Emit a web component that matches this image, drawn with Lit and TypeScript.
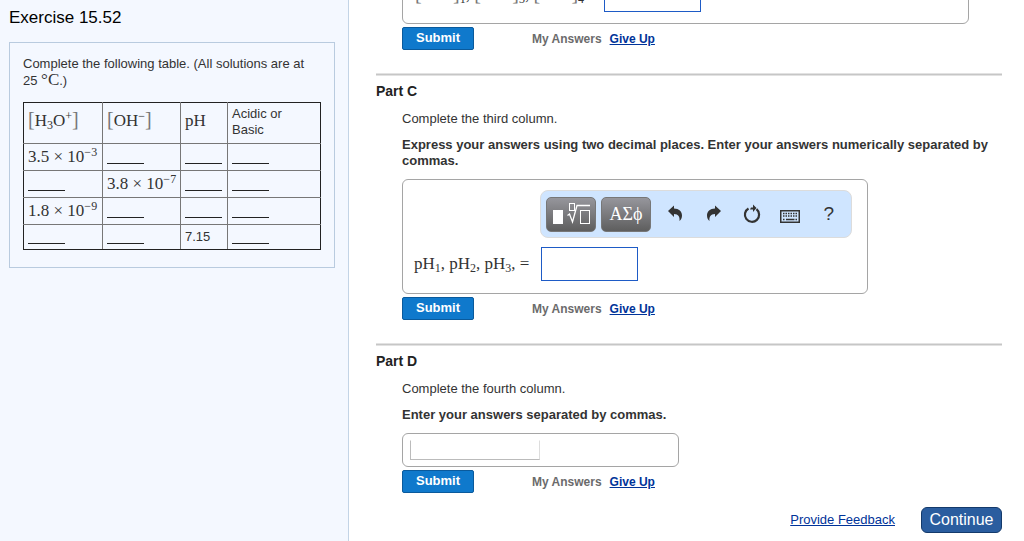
import { LitElement, html, css } from "lit";
import { customElement } from "lit/decorators.js";

const power = (base: string, exp: string) => html`<span class="math">${base} × 10<sup>−${exp}</sup></span>`;
const blank = html`<span class="blank"></span>`;
const hydroxide = html`<span class="bracket">[</span>OH<sup>−</sup><span class="bracket">]</span>`;

@customElement("submit-row")
class SubmitRow extends LitElement {
  static styles = css`
    :host { display: flex; align-items: center; padding-top: 3px; }
    .submit {
      box-sizing: border-box; width: 72px; height: 23px; margin: 0; padding: 0 0 1px;
      border: 1px solid #0a5a9c; border-radius: 2px; background: #0f79cc; color: #fff;
      font: bold 13px/18px "Liberation Sans", Arial, sans-serif;
    }
    .mine { margin-left: 58px; color: #6b6b6b; font: bold 12px/16px "Liberation Sans", Arial, sans-serif; }
    .give { margin-left: 8px; color: #003399; font: bold 12px/16px "Liberation Sans", Arial, sans-serif; }
  `;
  render() {
    return html`<button class="submit" type="button">Submit</button>
      <span class="mine">My Answers</span>
      <a class="give" href="#">Give Up</a>`;
  }
}

@customElement("math-toolbar")
class MathToolbar extends LitElement {
  static styles = css`
    :host {
      box-sizing: border-box; display: flex; align-items: center; width: 312px; height: 48px; padding: 0 3px 0 5px;
      border: 1px solid #dcdcdc; border-radius: 8px; background: #cfe5ff;
    }
    button { margin: 0; padding: 0; border: 0; background: none; color: #333; display: grid; place-items: center; }
    .key {
      box-sizing: border-box; width: 50px; height: 35px; margin-right: 5px; border: 1px solid #777; border-radius: 5px;
      background: linear-gradient(#96969c, #5e5e5e); color: #fff; font: 18px/20px "Liberation Serif", serif;
    }
    .tool { flex: 1; height: 35px; font: 19px/20px "Liberation Sans", Arial, sans-serif; }
    svg { display: block; }
  `;
  render() {
    return html`
      <button class="key" type="button" aria-label="Templates">
        <svg width="40" height="26" viewBox="0 0 40 26" fill="none" stroke="#fff">
          <rect x="2" y="9" width="10" height="14" fill="#fff" stroke="none" />
          <rect x="18.5" y="2.500" width="5" height="7" />
          <path d="M16.500 14.500l2-1.500 3 8L26 4.500h13" stroke-width="1.300" />
          <rect x="29.5" y="9.500" width="9" height="13" />
        </svg>
      </button>
      <button class="key" type="button" aria-label="Symbols">ΑΣϕ</button>
      <button class="tool" type="button" aria-label="Undo">
        <svg width="16" height="18" viewBox="0 0 16 18" fill="#333"><path d="M1 6 7 .5V3.500c5 0 8 3 8 7 0 2.300-1 4.300-2.500 5.500C13 12 11.500 9 7 9v3z" /></svg>
      </button>
      <button class="tool" type="button" aria-label="Redo">
        <svg width="16" height="18" viewBox="0 0 16 18" fill="#333"><path d="M15 6 9 .5V3.500c-5 0-8 3-8 7 0 2.300 1 4.300 2.500 5.500C3 12 4.500 9 9 9v3z" /></svg>
      </button>
      <button class="tool" type="button" aria-label="Reset">
        <svg width="18" height="20" viewBox="0 0 18 20"><path d="M5.500 4.500A7.100 7.100 0 1 0 13.500 5.200" fill="none" stroke="#333" stroke-width="2.200" /><path d="M8 3.600H10V.500L13.500 4 10 8V5.600H7z" fill="#333" /></svg>
      </button>
      <button class="tool" type="button" aria-label="Keyboard">
        <svg width="20" height="17" viewBox="0 -4 20 17"><rect x=".75" y=".75" width="18.500" height="11.500" fill="none" stroke="#333" stroke-width="1.500" />
          <path d="M3 3.500h14M3 6h14" stroke="#333" stroke-width="1.500" stroke-dasharray="1.500 1" /><path d="M3 9.500h1.500M6 9.500h8.500M15.500 9.500H17" stroke="#333" stroke-width="1.500" /></svg>
      </button>
      <button class="tool" type="button" aria-label="Help">?</button>`;
  }
}

@customElement("app-root")
class AppRoot extends LitElement {
  static styles = css`
    :host {
      display: grid; grid-template-columns: 349px 1fr; height: 100vh; overflow: hidden; background: #fff; color: #333;
      font: 13px/16px "Liberation Sans", Arial, sans-serif;
    }
    .left { box-sizing: border-box; padding: 8px 13px 0 9px; border-right: 1px solid #c3d4e6; background: #f4f8ff; }
    h1 { margin: 0 0 14px; color: #000; font-size: 17px; line-height: 20px; font-weight: normal; }
    .problem { padding: 13px 13px 17px; border: 1px solid #b9cbdf; }
    .problem p { margin: 0 0 13px; }
    .math { font: 17px/16px "Liberation Serif", serif; white-space: nowrap; }
    .math sup, .math sub { font-size: 12px; line-height: 0; }
    .math sub { vertical-align: -3px; }
    .math sup { vertical-align: 6px; }
    .bracket { font-size: 20px; line-height: 0; color: #777; }
    table { box-sizing: border-box; width: 298px; border-collapse: collapse; table-layout: fixed; border: 1px solid #222; }
    th, td { box-sizing: border-box; height: 27px; padding: 0 4px; border: 1px solid #777; text-align: left; font-weight: normal; }
    th { height: 41px; padding-bottom: 3px; }
    tr:first-child > * { border-top-color: #222; }
    tr:last-child > * { height: 25px; border-bottom-color: #222; }
    tr > :first-child { border-left-color: #222; }
    tr > :last-child { border-right-color: #222; }
    .blank { display: block; width: 37px; height: 12px; border-bottom: 1px solid #222; }
    .right { padding: 0 22px 0 27px; }
    .body { padding-left: 26px; }
    section { margin-top: 23px; }
    section::before { content: ""; display: block; height: 3px; background: linear-gradient(#e2e2e2 1px, #c6c6c6 1px 2px, #e2e2e2 2px); }
    h2 { margin: 0; padding: 6px 0 11px; font-size: 14px; line-height: 18px; color: #222; }
    .body p { margin: 0 0 10px; }
    .body p.how { font-weight: bold; }
    .box { box-sizing: border-box; border: 1px solid #a5a5a5; border-radius: 6px; }
    .b { width: 567px; height: 84px; margin-top: -60px; padding: 38px 12px 11px; display: flex; align-items: flex-end; }
    .b label { flex: 0 0 189px; padding-bottom: 9px; }
    .c { width: 466px; height: 115px; padding: 10px 15px 12px 11px; display: flex; flex-direction: column; justify-content: space-between; }
    .c math-toolbar { align-self: flex-end; }
    .line { display: flex; align-items: center; }
    .line label { flex: 0 0 127px; }
    .d { width: 277px; height: 34px; padding: 6px 7px; display: flex; }
    .field { box-sizing: border-box; width: 97px; height: 34px; border: 1px solid #1e5bc6; background: #fff; }
    .plain { box-sizing: border-box; width: 130px; height: 20px; border: 1px solid #bbb; border-top-color: #fff; border-right-color: #ddd; }
    .end { display: flex; justify-content: flex-end; align-items: center; gap: 26px; margin-top: 14px; }
    .end a { color: #003399; }
    .continue {
      box-sizing: border-box; width: 81px; height: 26px; padding: 0; border: 1px solid #143a6b; border-radius: 6px;
      background: #2a5d9f; color: #fff; font: 16px/20px "Liberation Sans", Arial, sans-serif;
    }
  `;
  render() {
    return html`
      <aside class="left">
        <h1>Exercise 15.52</h1>
        <div class="problem">
          <p>Complete the following table. (All solutions are at 25 <span class="math">°C</span>.)</p>
          <table>
            <colgroup><col width="79" /><col width="78" /><col width="47" /><col /></colgroup>
            <tbody>
              <tr>
                <th><span class="math"><span class="bracket">[</span>H<sub>3</sub>O<sup>+</sup><span class="bracket">]</span></span></th>
                <th><span class="math">${hydroxide}</span></th>
                <th><span class="math">pH</span></th>
                <th>Acidic or<br />Basic</th>
              </tr>
              <tr><td>${power("3.5", "3")}</td><td>${blank}</td><td>${blank}</td><td>${blank}</td></tr>
              <tr><td>${blank}</td><td>${power("3.8", "7")}</td><td>${blank}</td><td>${blank}</td></tr>
              <tr><td>${power("1.8", "9")}</td><td>${blank}</td><td>${blank}</td><td>${blank}</td></tr>
              <tr><td>${blank}</td><td>${blank}</td><td>7.15</td><td>${blank}</td></tr>
            </tbody>
          </table>
        </div>
      </aside>
      <main class="right">
        <div class="body">
          <div class="box b">
            <label for="b" class="math">${hydroxide}<sub>1</sub>, ${hydroxide}<sub>3</sub>, ${hydroxide}<sub>4</sub> =</label>
            <input id="b" class="field" />
          </div>
          <submit-row></submit-row>
        </div>
        <section>
          <h2>Part C</h2>
          <div class="body">
            <p>Complete the third column.</p>
            <p class="how">Express your answers using two decimal places. Enter your answers numerically separated by commas.</p>
            <div class="box c">
              <math-toolbar></math-toolbar>
              <div class="line">
                <label for="c" class="math">pH<sub>1</sub>, pH<sub>2</sub>, pH<sub>3</sub>, =</label>
                <input id="c" class="field" />
              </div>
            </div>
            <submit-row></submit-row>
          </div>
        </section>
        <section>
          <h2>Part D</h2>
          <div class="body">
            <p>Complete the fourth column.</p>
            <p class="how">Enter your answers separated by commas.</p>
            <div class="box d"><input class="plain" aria-label="Part D answer" /></div>
            <submit-row></submit-row>
          </div>
        </section>
        <div class="end">
          <a href="#">Provide Feedback</a>
          <button class="continue" type="button">Continue</button>
        </div>
      </main>`;
  }
}
